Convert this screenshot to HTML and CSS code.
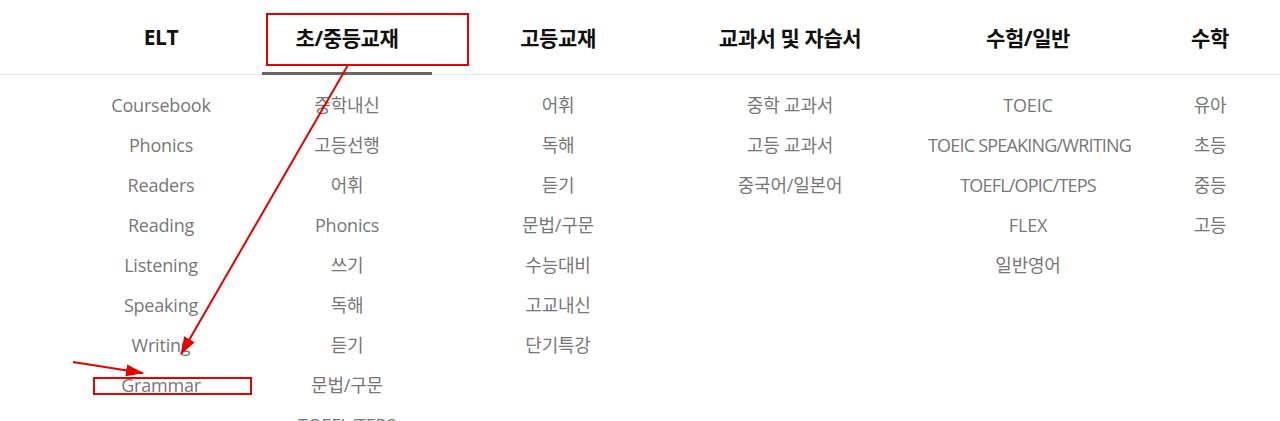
FILE: index.html
```html
<!DOCTYPE html>
<html lang="ko">
<head>
<meta charset="utf-8">
<link rel="stylesheet" href="styles.css">
</head>
<body>
<div class="page">
  <nav class="gnb">
    <div class="cols">
      <div class="col c1"><a class="top">ELT</a></div>
      <div class="col c2"><a class="top active">초/중등교재</a></div>
      <div class="col c3"><a class="top">고등교재</a></div>
      <div class="col c4"><a class="top">교과서 및 자습서</a></div>
      <div class="col c5"><a class="top">수험/일반</a></div>
      <div class="col c6"><a class="top">수학</a></div>
    </div>
  </nav>
  <div class="sub">
    <div class="cols">
      <ul class="col c1">
        <li>Coursebook</li><li>Phonics</li><li>Readers</li><li>Reading</li><li>Listening</li><li>Speaking</li><li>Writing</li><li>Grammar</li>
      </ul>
      <ul class="col c2">
        <li>중학내신</li><li>고등선행</li><li>어휘</li><li>Phonics</li><li>쓰기</li><li>독해</li><li>듣기</li><li>문법/구문</li><li>TOEFL/TEPS</li>
      </ul>
      <ul class="col c3">
        <li>어휘</li><li>독해</li><li>듣기</li><li>문법/구문</li><li>수능대비</li><li>고교내신</li><li>단기특강</li>
      </ul>
      <ul class="col c4">
        <li>중학 교과서</li><li>고등 교과서</li><li>중국어/일본어</li>
      </ul>
      <ul class="col c5">
        <li>TOEIC</li><li class="tight">TOEIC SPEAKING/WRITING</li><li class="tight">TOEFL/OPIC/TEPS</li><li>FLEX</li><li>일반영어</li>
      </ul>
      <ul class="col c6">
        <li>유아</li><li>초등</li><li>중등</li><li>고등</li>
      </ul>
    </div>
  </div>
  <svg class="marks" width="1280" height="421" viewBox="0 0 1280 421">
    <defs>
      <marker id="ah2" markerWidth="18" markerHeight="12" refX="17" refY="6" orient="auto" markerUnits="userSpaceOnUse">
        <path d="M0,0 L18,6 L0,12 Z" fill="#e60000"/>
      </marker>
    </defs>
    <rect x="267" y="14" width="201" height="51" fill="none" stroke="#e60000" stroke-width="2"/>
    <line x1="348" y1="65" x2="181" y2="354" stroke="#e60000" stroke-width="2" marker-end="url(#ah2)"/>
    <line x1="73" y1="362" x2="143" y2="373" stroke="#e60000" stroke-width="2" marker-end="url(#ah2)"/>
    <rect x="94" y="378" width="157" height="16" fill="none" stroke="#e60000" stroke-width="2"/>
  </svg>
</div>
</body>
</html>
```

FILE: styles.css
```css
html, body {
  margin: 0;
  padding: 0;
  background: #fff;
}
body {
  font-family: "Open Sans", "Noto Sans CJK KR", sans-serif;
  width: 1280px;
  height: 421px;
  overflow: hidden;
}
.page {
  position: relative;
  width: 1280px;
  height: 421px;
  overflow: hidden;
}
.cols {
  display: grid;
  grid-template-columns: 76px 170px 16px 170px 41px 170px 62px 170px 53px 200px 32px 100px;
}
.c1 { grid-column: 2; }
.c2 { grid-column: 4; }
.c3 { grid-column: 6; }
.c4 { grid-column: 8; }
.c5 { grid-column: 10; }
.c6 { grid-column: 12; }

.gnb {
  height: 74px;
  border-bottom: 1px solid #e8e8e8;
}
.gnb .col {
  display: flex;
  justify-content: center;
  height: 74px;
  position: relative;
}
.top {
  display: flex;
  align-items: center;
  justify-content: center;
  width: 100%;
  font-size: 21px;
  font-weight: 700;
  color: #111;
  letter-spacing: -0.4px;
  text-decoration: none;
  box-sizing: border-box;
  padding-bottom: 1px;
}
.top.active {
  border-bottom: 3px solid #666;
  margin-bottom: -1px;
  padding-top: 2px;
  padding-bottom: 0;
}
.sub ul {
  list-style: none;
  margin: 0;
  padding: 10px 0 0;
}
.sub li {
  height: 40px;
  line-height: 40px;
  text-align: center;
  font-size: 18px;
  color: #777;
  white-space: nowrap;
  letter-spacing: -0.2px;
}
.sub li.tight {
  letter-spacing: -0.8px;
}
.marks {
  position: absolute;
  left: 0;
  top: 0;
  pointer-events: none;
}
```
